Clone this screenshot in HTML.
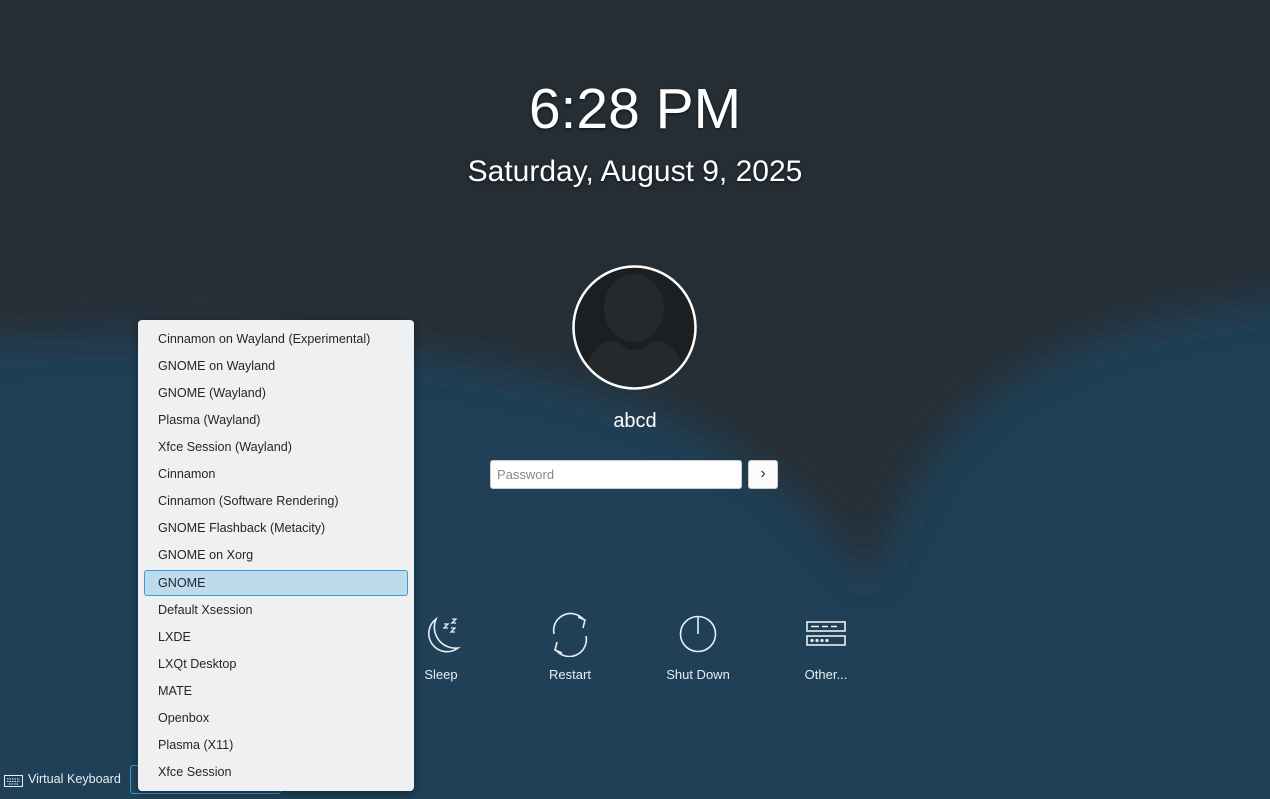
<!DOCTYPE html>
<html><head><meta charset="utf-8"><style>
body{margin:0;width:1270px;height:799px;overflow:hidden;background:#203f55;font-family:"Liberation Sans",sans-serif;position:relative}
.bg{position:absolute;left:0;top:0}
.t{position:absolute;color:#fff;text-align:center;width:1270px;left:0;text-shadow:0 1px 3px rgba(0,0,0,.6)}
.menu{position:absolute;left:138px;top:320px;width:276px;height:471px;background:#eff0f1;border-radius:4px;box-shadow:0 2px 8px rgba(0,0,0,.4)}
.menu div{height:27px;line-height:27px;padding-left:20px;font-size:12.6px;color:#232629}
.menu .sel{background:#bcdcee;border:1px solid #3d9ad6;border-radius:3px;margin:0 6px;padding-left:13px;height:24px;line-height:24px;margin-top:1px;margin-bottom:1px}
.act{position:absolute;color:#e8eef2;font-size:13px;text-align:center;width:100px}
</style></head><body>
<svg class="bg" width="1270" height="799"><defs><filter id="b" x="-20%" y="-20%" width="140%" height="140%"><feGaussianBlur stdDeviation="22"/></filter></defs>
<rect width="1270" height="799" fill="#1f4057"/>
<path filter="url(#b)" d="M-100,-100 L1370,-100 L1370,290 C1200,300 1050,330 960,420 C900,480 880,560 868,585 C840,530 760,440 600,390 C420,340 200,320 -100,345 Z" fill="#262d35"/>
</svg>
<div class="t" style="top:76px;font-size:57px">6:28 PM</div>
<div class="t" style="top:155px;font-size:30px">Saturday, August 9, 2025</div>
<svg style="position:absolute;left:571px;top:264px" width="127" height="127"><defs><clipPath id="c"><circle cx="63.5" cy="63.5" r="61"/></clipPath></defs>
<circle cx="63.5" cy="63.5" r="61" fill="#1c1f22"/>
<g clip-path="url(#c)"><ellipse cx="63" cy="44" rx="30" ry="34" fill="#26292c"/><path d="M10,127 C15,80 40,70 50,80 C55,88 72,88 77,80 C87,70 112,80 117,127Z" fill="#26292c"/></g>
<circle cx="63.5" cy="63.5" r="61" fill="none" stroke="#fff" stroke-width="2.5"/></svg>
<div class="t" style="top:410px;font-size:20px;text-shadow:none">abcd</div>
<div style="position:absolute;left:490px;top:460px;width:252px;height:29px;background:#fff;border-radius:3px;border:1px solid #ccc;box-sizing:border-box;font-size:13px;color:#888;line-height:27px;padding-left:6px">Password</div>
<div style="position:absolute;left:748px;top:460px;width:30px;height:29px;background:#fcfcfc;border-radius:3px;border:1px solid #ccc;box-sizing:border-box;text-align:center;line-height:26px;color:#333;font-size:16px">›</div>
<svg style="position:absolute;left:420px;top:612px" width="450" height="45" fill="none" stroke="#e8eef2" stroke-width="1.6">
<path d="M16,7 A17,17 0 1 0 38,36 A21,21 0 0 1 16,7Z"/>
<path d="M24,12h4l-4,4h4 M32,7h4l-4,4h4 M31,16h4l-4,4h4" stroke-width="1.3"/>
<path d="M164,8 A17,17 0 0 0 134,22 M136,38 A17,17 0 0 0 166,24"/>
<path d="M158,5 L165,8 L163,16 M142,41 L135,38 L137,30"/>
<circle cx="278" cy="22" r="17.5"/><path d="M278,4 V22"/>
<rect x="387" y="10" width="38" height="9"/><rect x="387" y="24" width="38" height="9"/>
<path d="M391,14.5h8M402,14.5h6M411,14.5h6"/><g fill="#e8eef2" stroke="none"><circle cx="392" cy="28.5" r="1.6"/><circle cx="397" cy="28.5" r="1.6"/><circle cx="402" cy="28.5" r="1.6"/><circle cx="407" cy="28.5" r="1.6"/></g>
</svg>
<div class="act" style="left:391px;top:667px">Sleep</div>
<div class="act" style="left:520px;top:667px">Restart</div>
<div class="act" style="left:648px;top:667px">Shut Down</div>
<div class="act" style="left:776px;top:667px">Other...</div>
<svg style="position:absolute;left:4px;top:775px" width="19" height="12" fill="none" stroke="#e8eef2" stroke-width="1"><rect x=".5" y=".5" width="18" height="11"/><path d="M3,4h13M3,6.5h13M5,9h9" stroke-dasharray="1.5 1"/></svg>
<div style="position:absolute;left:28px;top:772px;color:#e8eef2;font-size:12.6px">Virtual Keyboard</div>
<div style="position:absolute;left:130px;top:765px;width:151px;height:29px;border:1px solid #3d9ad6;border-radius:3px;box-sizing:border-box;background:#21455e"></div>
<div class="menu" style="padding-top:6px;box-sizing:border-box">
<div>Cinnamon on Wayland (Experimental)</div><div>GNOME on Wayland</div><div>GNOME (Wayland)</div><div>Plasma (Wayland)</div><div>Xfce Session (Wayland)</div><div>Cinnamon</div><div>Cinnamon (Software Rendering)</div><div>GNOME Flashback (Metacity)</div><div>GNOME on Xorg</div><div class="sel">GNOME</div><div>Default Xsession</div><div>LXDE</div><div>LXQt Desktop</div><div>MATE</div><div>Openbox</div><div>Plasma (X11)</div><div>Xfce Session</div>
</div>
</body></html>
